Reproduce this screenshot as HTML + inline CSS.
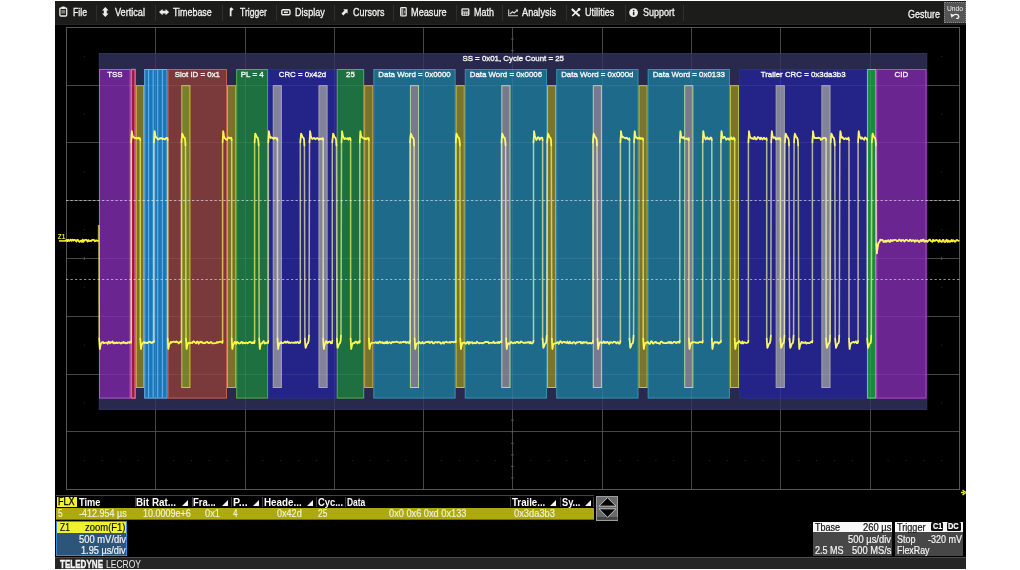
<!DOCTYPE html>
<html><head><meta charset="utf-8"><title>FlexRay decode</title>
<style>
html,body{margin:0;padding:0;background:#fff;}
body{width:1020px;height:570px;position:relative;overflow:hidden;font-family:"Liberation Sans",sans-serif;}
#ui{position:absolute;left:55px;top:1px;width:911px;height:568px;background:#000;overflow:hidden;will-change:transform;}
#menu{position:absolute;left:0;top:0;width:911px;height:23px;background:#1c1c1b;border-bottom:1px solid #242424;}
.mi{position:absolute;top:4.8px;-webkit-text-stroke:0.3px #f2f2f2;color:#f2f2f2;font-size:10.5px;line-height:12px;white-space:nowrap;transform-origin:0 50%;}
.sep{position:absolute;top:4px;width:1px;height:16px;background:#2f2f2f;}
.ic{position:absolute;}
#plot{position:absolute;left:-55px;top:-1px;}
.lb{font-family:"Liberation Sans",sans-serif;font-size:8px;fill:#f8f8f8;text-anchor:middle;stroke:#f8f8f8;stroke-width:0.32px;}
#tbl{position:absolute;left:1px;top:494px;width:538px;height:24px;border-top:1px solid #444;}
.th{position:absolute;top:1.6px;height:10px;color:#fff;font-weight:bold;font-size:10px;line-height:10px;white-space:nowrap;transform-origin:0 50%;}
.td{position:absolute;top:12.5px;-webkit-text-stroke:0.2px #f1efd2;color:#f1efd2;font-size:10px;line-height:10px;white-space:nowrap;transform-origin:0 50%;}
.cs{position:absolute;top:1px;width:1px;height:10px;background:#3a3a3a;}
.tri{position:absolute;top:4px;width:0;height:0;border-left:6px solid transparent;border-bottom:6px solid #f4f4f4;}
#row{position:absolute;left:0;top:12px;width:538px;height:11px;background:#b0a810;border-bottom:1px solid #2a7c8c;}
#flx{position:absolute;left:1px;top:1px;width:20px;height:10px;background:#f2f22e;color:#000;font-size:10px;line-height:10.5px;-webkit-text-stroke:0.3px #000;}
.box{position:absolute;font-size:10.5px;color:#f4f4f4;white-space:nowrap;-webkit-text-stroke:0.2px currentColor;}
.r{position:absolute;white-space:nowrap;transform-origin:100% 50%;}
.l{position:absolute;white-space:nowrap;transform-origin:0 50%;}
#foot{position:absolute;left:0;top:556px;width:911px;height:12px;background:#262626;border-top:1px solid #4a4a4a;}
</style></head><body>
<div id="ui">
 <div id="menu">
  <span class="mi" style="left:18.0px;transform:scaleX(0.827)">File</span>
  <span class="mi" style="left:60.0px;transform:scaleX(0.871)">Vertical</span>
  <span class="mi" style="left:118.0px;transform:scaleX(0.847)">Timebase</span>
  <span class="mi" style="left:185.0px;transform:scaleX(0.821)">Trigger</span>
  <span class="mi" style="left:239.8px;transform:scaleX(0.866)">Display</span>
  <span class="mi" style="left:297.6px;transform:scaleX(0.854)">Cursors</span>
  <span class="mi" style="left:356.3px;transform:scaleX(0.874)">Measure</span>
  <span class="mi" style="left:419.2px;transform:scaleX(0.852)">Math</span>
  <span class="mi" style="left:467.4px;transform:scaleX(0.875)">Analysis</span>
  <span class="mi" style="left:530.4px;transform:scaleX(0.866)">Utilities</span>
  <span class="mi" style="left:587.7px;transform:scaleX(0.854)">Support</span>
  <span class="mi" style="left:852.8px;top:6.8px;transform:scaleX(0.854)">Gesture</span>
  <i class="sep" style="left:41.0px"></i>
  <i class="sep" style="left:100.0px"></i>
  <i class="sep" style="left:167.0px"></i>
  <i class="sep" style="left:220.5px"></i>
  <i class="sep" style="left:279.0px"></i>
  <i class="sep" style="left:338.0px"></i>
  <i class="sep" style="left:400.5px"></i>
  <i class="sep" style="left:447.0px"></i>
  <i class="sep" style="left:511.0px"></i>
  <i class="sep" style="left:569.5px"></i>
  <i class="sep" style="left:628.0px"></i>
  <svg class="ic" style="left:4.3px;top:5.3px" width="9" height="11" viewBox="0 0 9 11"><rect x="0.9" y="2" width="6.8" height="8" rx="1.1" fill="none" stroke="#ededed" stroke-width="1.3"/><rect x="2.6" y="0.4" width="3.4" height="2.6" rx="0.8" fill="#ededed"/><rect x="2.3" y="4" width="4" height="3.6" fill="#7c7c7c"/></svg>
  <svg class="ic" style="left:47.2px;top:6.0px" width="7" height="10.4" viewBox="0 0 7 10.4"><path d="M3.3 0 L6.6 3.5 H4.8 V6.5 H6.6 L3.3 10 L0 6.5 H1.8 V3.5 H0 Z" fill="#ededed"/></svg>
  <svg class="ic" style="left:103.6px;top:8.2px" width="10.4" height="6.4" viewBox="0 0 10.4 6.4"><path d="M0 3.1 L3.6 0 V1.8 H6.6 V0 L10.2 3.1 L6.6 6.2 V4.4 H3.6 V6.2 Z" fill="#ededed"/></svg>
  <svg class="ic" style="left:174.0px;top:6.1px" width="6" height="10" viewBox="0 0 6 10"><path d="M0.8 9.2 V1.6 L2.2 0.2 L4.6 2.3 L2.5 3.9 V9.2 Z" fill="#ededed"/></svg>
  <svg class="ic" style="left:226.0px;top:7.6px" width="10" height="7.2" viewBox="0 0 10 7.2"><rect x="0.8" y="0.8" width="8.2" height="5" rx="1.2" fill="none" stroke="#ededed" stroke-width="1.4"/><rect x="2.9" y="2.5" width="4" height="1.6" fill="#ededed"/></svg>
  <svg class="ic" style="left:285.5px;top:7.6px" width="7" height="7" viewBox="0 0 7 7"><path d="M2.2 0.3 H6.6 V4.7 L5.3 3.4 L2.3 6.4 L0.5 4.6 L3.5 1.6 Z" fill="#ededed"/></svg>
  <svg class="ic" style="left:344.8px;top:5.9px" width="7" height="10" viewBox="0 0 7 10"><rect x="0.7" y="0.7" width="5.5" height="8.2" rx="0.7" fill="#2a2a2a" stroke="#ededed" stroke-width="1.2"/><rect x="1.3" y="1.3" width="2" height="7" fill="#9a9a9a"/><path d="M4 4.2 H5.6 M4 5.8 H5.6" stroke="#cfcfcf" stroke-width="0.8"/></svg>
  <svg class="ic" style="left:406.0px;top:7.3px" width="9" height="8.4" viewBox="0 0 9 8.4"><rect x="0.3" y="0.3" width="8.2" height="7.7" rx="1.4" fill="#dcdcdc"/><rect x="1.7" y="1.6" width="5.4" height="1.9" fill="#333"/><path d="M1.9 5 H3.3 M3.9 5 H5.1 M5.7 5 H6.9 M1.9 6.7 H3.3 M3.9 6.7 H5.1 M5.7 6.7 H6.9" stroke="#333" stroke-width="1.1"/></svg>
  <svg class="ic" style="left:452.8px;top:7.6px" width="11" height="8" viewBox="0 0 11 8"><path d="M0.7 0.5 V6.8 H10" stroke="#cfcfcf" stroke-width="1.1" fill="none"/><path d="M2 5 L4.4 2.8 L6.2 4 L9.2 1.2" stroke="#d8d8d8" stroke-width="1.2" fill="none"/><path d="M7.4 0.5 H10 V3.1 Z" fill="#d8d8d8"/></svg>
  <svg class="ic" style="left:516.4px;top:6.9px" width="10" height="9" viewBox="0 0 10 9"><path d="M1.9 1.9 L8 7.5" stroke="#ededed" stroke-width="2.1" stroke-linecap="round"/><path d="M7.9 1.5 L1.7 7.5" stroke="#ededed" stroke-width="1.7" stroke-linecap="round"/><path d="M0.2 1.4 L1.6 0 L2.2 1.4 L3.4 2 L2 3.4 Z" fill="#ededed"/><circle cx="8.1" cy="1.4" r="1.35" fill="#ededed"/></svg>
  <svg class="ic" style="left:574.2px;top:6.5px" width="9.4" height="9.4" viewBox="0 0 9.4 9.4"><circle cx="4.6" cy="4.6" r="4.4" fill="#ededed"/><rect x="3.9" y="3.9" width="1.5" height="3.3" fill="#222"/><rect x="3.9" y="1.9" width="1.5" height="1.3" fill="#222"/></svg>
  <div style="position:absolute;left:888.5px;top:0.8px;width:22.3px;height:21px;background:#555;border:1px dotted #8a8a8a;box-sizing:border-box"><span class="l" style="left:2.6px;top:2.4px;font-size:6.8px;line-height:8px;color:#f4f4f4;transform:scaleX(0.98)">Undo</span><svg style="position:absolute;left:5.4px;top:9.9px" width="10" height="6.5" viewBox="0 0 11 7"><path d="M3 3 C5 0.6 9.4 1 9.6 3.6 C9.8 5.2 8.6 6.2 6.8 6.2" stroke="#f2f2f2" stroke-width="1.5" fill="none"/><path d="M0.4 0.6 L4.8 2.4 L1.6 5.2 Z" fill="#f2f2f2"/></svg></div>
 </div>
 <svg id="plot" width="1020" height="570" viewBox="0 0 1020 570">
  <path d="M155.5 27.5 V489.5 M245.5 27.5 V489.5 M334.5 27.5 V489.5 M423.5 27.5 V489.5 M512.5 27.5 V489.5 M602.5 27.5 V489.5 M691.5 27.5 V489.5 M780.5 27.5 V489.5 M870.5 27.5 V489.5 M66.5 85.5 H959.5 M66.5 142.5 H959.5 M66.5 200.5 H959.5 M66.5 258.5 H959.5 M66.5 316.5 H959.5 M66.5 374.5 H959.5 M66.5 431.5 H959.5" stroke="#393939" stroke-width="1" fill="none"/>
  <path d="M84.4 257.0 V260.0 M102.2 257.0 V260.0 M120.1 257.0 V260.0 M137.9 257.0 V260.0 M155.8 257.0 V260.0 M173.7 257.0 V260.0 M191.5 257.0 V260.0 M209.4 257.0 V260.0 M227.2 257.0 V260.0 M245.1 257.0 V260.0 M263.0 257.0 V260.0 M280.8 257.0 V260.0 M298.7 257.0 V260.0 M316.5 257.0 V260.0 M334.4 257.0 V260.0 M352.3 257.0 V260.0 M370.1 257.0 V260.0 M388.0 257.0 V260.0 M405.8 257.0 V260.0 M423.7 257.0 V260.0 M441.6 257.0 V260.0 M459.4 257.0 V260.0 M477.3 257.0 V260.0 M495.1 257.0 V260.0 M513.0 257.0 V260.0 M530.9 257.0 V260.0 M548.7 257.0 V260.0 M566.6 257.0 V260.0 M584.4 257.0 V260.0 M602.3 257.0 V260.0 M620.2 257.0 V260.0 M638.0 257.0 V260.0 M655.9 257.0 V260.0 M673.7 257.0 V260.0 M691.6 257.0 V260.0 M709.5 257.0 V260.0 M727.3 257.0 V260.0 M745.2 257.0 V260.0 M763.0 257.0 V260.0 M780.9 257.0 V260.0 M798.8 257.0 V260.0 M816.6 257.0 V260.0 M834.5 257.0 V260.0 M852.3 257.0 V260.0 M870.2 257.0 V260.0 M888.1 257.0 V260.0 M905.9 257.0 V260.0 M923.8 257.0 V260.0 M941.6 257.0 V260.0 M511.0 39.0 H514.0 M511.0 50.6 H514.0 M511.0 62.1 H514.0 M511.0 73.7 H514.0 M511.0 85.2 H514.0 M511.0 96.8 H514.0 M511.0 108.3 H514.0 M511.0 119.9 H514.0 M511.0 131.4 H514.0 M511.0 143.0 H514.0 M511.0 154.6 H514.0 M511.0 166.1 H514.0 M511.0 177.7 H514.0 M511.0 189.2 H514.0 M511.0 200.8 H514.0 M511.0 212.3 H514.0 M511.0 223.8 H514.0 M511.0 235.4 H514.0 M511.0 246.9 H514.0 M511.0 258.5 H514.0 M511.0 270.1 H514.0 M511.0 281.6 H514.0 M511.0 293.1 H514.0 M511.0 304.7 H514.0 M511.0 316.2 H514.0 M511.0 327.8 H514.0 M511.0 339.4 H514.0 M511.0 350.9 H514.0 M511.0 362.4 H514.0 M511.0 374.0 H514.0 M511.0 385.6 H514.0 M511.0 397.1 H514.0 M511.0 408.6 H514.0 M511.0 420.2 H514.0 M511.0 431.8 H514.0 M511.0 443.3 H514.0 M511.0 454.9 H514.0 M511.0 466.4 H514.0 M511.0 477.9 H514.0" stroke="#484848" stroke-width="1" fill="none"/>
  <path d="M83.86 56.4 H959 M83.86 114.1 H959 M83.86 171.9 H959 M83.86 229.6 H959 M83.86 287.4 H959 M83.86 345.1 H959 M83.86 402.9 H959 M83.86 460.6 H959" stroke="#2e2e2e" stroke-width="1" stroke-dasharray="1 16.86" fill="none"/>
  <rect x="66.5" y="27.5" width="893" height="462" fill="none" stroke="#565656" stroke-width="1"/>
<rect x="99.3" y="53.6" width="827.5" height="355.8" fill="#29294d" stroke="#35355c" stroke-width="1"/>
<rect x="99.50" y="69.5" width="30.60" height="328.6" fill="#6a2590" stroke="#b45ad0" stroke-width="1"/>
<rect x="131.35" y="69.5" width="3.77" height="328.6" fill="#9a1838" stroke="#e0609a" stroke-width="1.5"/>
<rect x="136.38" y="85.7" width="7.34" height="301.8" fill="#78722a" stroke="#d8a848" stroke-width="1"/>
<rect x="144.72" y="69.5" width="22.36" height="328.6" fill="#1d76b8" stroke="#6cb4e4" stroke-width="1"/>
<path d="M148.59 70.0 V397.6" stroke="#5cb4ec" stroke-width="1.1"/>
<path d="M153.16 70.0 V397.6" stroke="#5cb4ec" stroke-width="1.1"/>
<path d="M157.74 70.0 V397.6" stroke="#5cb4ec" stroke-width="1.1"/>
<path d="M162.41 70.0 V397.6" stroke="#5cb4ec" stroke-width="1.1"/>
<rect x="168.08" y="69.5" width="58.44" height="328.6" fill="#7a3a3c" stroke="#c8604c" stroke-width="1"/>
<rect x="181.80" y="85.7" width="8.14" height="301.8" fill="#78802a" stroke="#d4c43c" stroke-width="1"/>
<rect x="227.52" y="85.7" width="8.14" height="301.8" fill="#78722a" stroke="#d8a848" stroke-width="1"/>
<rect x="236.66" y="69.5" width="31.00" height="328.6" fill="#1f7040" stroke="#54b048" stroke-width="1"/>
<rect x="268.66" y="69.5" width="67.58" height="328.6" fill="#242488" stroke="#2c2c98" stroke-width="1"/>
<rect x="273.24" y="85.7" width="8.14" height="301.8" fill="#82829a" stroke="#a6a6b2" stroke-width="1"/>
<rect x="318.96" y="85.7" width="8.14" height="301.8" fill="#82829a" stroke="#a6a6b2" stroke-width="1"/>
<rect x="337.24" y="69.5" width="26.43" height="328.6" fill="#1f7040" stroke="#54b048" stroke-width="1"/>
<rect x="364.68" y="85.7" width="8.14" height="301.8" fill="#78722a" stroke="#d8a848" stroke-width="1"/>
<rect x="373.82" y="69.5" width="81.30" height="328.6" fill="#1e6a8a" stroke="#3a90aa" stroke-width="1"/>
<rect x="410.40" y="85.7" width="8.14" height="301.8" fill="#78788e" stroke="#b4d894" stroke-width="1"/>
<rect x="456.12" y="85.7" width="8.14" height="301.8" fill="#7a742c" stroke="#c0c840" stroke-width="1"/>
<rect x="465.26" y="69.5" width="81.30" height="328.6" fill="#1e6a8a" stroke="#3a90aa" stroke-width="1"/>
<rect x="501.84" y="85.7" width="8.14" height="301.8" fill="#78788e" stroke="#b4d894" stroke-width="1"/>
<rect x="547.56" y="85.7" width="8.14" height="301.8" fill="#7a742c" stroke="#c0c840" stroke-width="1"/>
<rect x="556.70" y="69.5" width="81.30" height="328.6" fill="#1e6a8a" stroke="#3a90aa" stroke-width="1"/>
<rect x="593.28" y="85.7" width="8.14" height="301.8" fill="#78788e" stroke="#b4d894" stroke-width="1"/>
<rect x="639.00" y="85.7" width="8.14" height="301.8" fill="#7a742c" stroke="#c0c840" stroke-width="1"/>
<rect x="648.14" y="69.5" width="81.30" height="328.6" fill="#1e6a8a" stroke="#3a90aa" stroke-width="1"/>
<rect x="684.72" y="85.7" width="8.14" height="301.8" fill="#78788e" stroke="#b4d894" stroke-width="1"/>
<rect x="730.44" y="85.7" width="8.14" height="301.8" fill="#7a742c" stroke="#c0c840" stroke-width="1"/>
<rect x="739.58" y="69.5" width="127.02" height="328.6" fill="#242488" stroke="#2c2c98" stroke-width="1"/>
<rect x="776.16" y="85.7" width="8.14" height="301.8" fill="#82829a" stroke="#a6a6b2" stroke-width="1"/>
<rect x="821.88" y="85.7" width="8.14" height="301.8" fill="#82829a" stroke="#a6a6b2" stroke-width="1"/>
<rect x="867.60" y="69.5" width="8.14" height="328.6" fill="#1c8a3c" stroke="#48e878" stroke-width="1"/>
<rect x="876.74" y="69.5" width="49.29" height="328.6" fill="#6a2590" stroke="#c040d8" stroke-width="1"/>
<text transform="translate(114.8 77.0) scale(0.985 1)" class="lb">TSS</text>
<text transform="translate(197.3 77.0) scale(0.985 1)" class="lb">Slot ID = 0x1</text>
<text transform="translate(252.2 77.0) scale(0.985 1)" class="lb">PL = 4</text>
<text transform="translate(302.5 77.0) scale(0.985 1)" class="lb">CRC = 0x42d</text>
<text transform="translate(350.5 77.0) scale(0.985 1)" class="lb">25</text>
<text transform="translate(414.5 77.0) scale(0.985 1)" class="lb">Data Word = 0x0000</text>
<text transform="translate(505.9 77.0) scale(0.985 1)" class="lb">Data Word = 0x0006</text>
<text transform="translate(597.3 77.0) scale(0.985 1)" class="lb">Data Word = 0x000d</text>
<text transform="translate(688.8 77.0) scale(0.985 1)" class="lb">Data Word = 0x0133</text>
<text transform="translate(803.1 77.0) scale(0.985 1)" class="lb">Trailer CRC = 0x3da3b3</text>
<text transform="translate(901.4 77.0) scale(0.985 1)" class="lb">CID</text>
<text transform="translate(513.2 61.1) scale(0.985 1)" class="lb">SS = 0x01, Cycle Count = 25</text>
  <path d="M155.5 27.5 V489.5 M245.5 27.5 V489.5 M334.5 27.5 V489.5 M423.5 27.5 V489.5 M512.5 27.5 V489.5 M602.5 27.5 V489.5 M691.5 27.5 V489.5 M780.5 27.5 V489.5 M870.5 27.5 V489.5 M66.5 85.5 H959.5 M66.5 142.5 H959.5 M66.5 200.5 H959.5 M66.5 258.5 H959.5 M66.5 316.5 H959.5 M66.5 374.5 H959.5 M66.5 431.5 H959.5" stroke="#ffffff" stroke-opacity="0.07" stroke-width="1" fill="none"/>
  <path d="M66 200.5 H960 M66 279.5 H960" stroke="#e8e8f4" stroke-width="1" stroke-dasharray="2.3 2.2" fill="none" stroke-opacity="0.62"/>
  <path d="M98.5 241.3 L98.6 225.0 M98.9 225.0 L99.1 338.6 M131.2 340.8 L131.2 142.4 M140.3 140.2 L140.3 338.6 M154.0 340.8 L154.0 142.4 M167.7 140.2 L167.7 338.6 M181.4 340.8 L181.4 142.4 M185.5 145.4 L186.0 338.6 M222.6 340.8 L222.6 142.4 M231.7 140.2 L231.7 338.6 M254.6 340.8 L254.6 142.4 M258.7 145.4 L259.2 338.6 M268.3 340.8 L268.3 142.4 M277.5 140.2 L277.5 338.6 M300.3 340.8 L300.3 142.4 M304.4 145.4 L304.9 338.6 M309.0 335.6 L309.5 142.4 M323.2 140.2 L323.2 338.6 M332.3 340.8 L332.3 142.4 M336.4 145.4 L336.9 338.6 M341.0 335.6 L341.5 142.4 M350.6 140.2 L350.6 338.6 M359.8 340.8 L359.8 142.4 M368.9 140.2 L368.9 338.6 M410.0 340.8 L410.0 142.4 M414.1 145.4 L414.6 338.6 M455.8 340.8 L455.8 142.4 M459.9 145.4 L460.3 338.6 M501.5 340.8 L501.5 142.4 M505.6 145.4 L506.1 338.6 M533.5 340.8 L533.5 142.4 M542.6 140.2 L542.6 338.6 M546.7 335.6 L547.2 142.4 M551.3 145.4 L551.8 338.6 M592.9 340.8 L592.9 142.4 M597.0 145.4 L597.5 338.6 M620.4 340.8 L620.4 142.4 M629.5 140.2 L629.5 338.6 M633.6 335.6 L634.1 142.4 M643.2 140.2 L643.2 338.6 M679.8 340.8 L679.8 142.4 M688.9 140.2 L688.9 338.6 M702.7 340.8 L702.7 142.4 M711.8 140.2 L711.8 338.6 M720.9 340.8 L720.9 142.4 M734.7 140.2 L734.7 338.6 M748.4 340.8 L748.4 142.4 M766.7 140.2 L766.7 338.6 M770.8 335.6 L771.2 142.4 M780.4 140.2 L780.4 338.6 M784.5 335.6 L784.9 142.4 M789.0 145.4 L789.5 338.6 M793.6 335.6 L794.1 142.4 M798.2 145.4 L798.7 338.6 M812.4 340.8 L812.4 142.4 M826.1 140.2 L826.1 338.6 M830.2 335.6 L830.7 142.4 M834.8 145.4 L835.2 338.6 M839.3 335.6 L839.8 142.4 M849.0 140.2 L849.0 338.6 M858.1 340.8 L858.1 142.4 M867.2 140.2 L867.2 338.6 M871.3 335.6 L871.8 142.4 M875.9 145.4 L876.4 243.8" stroke="#d2d232" stroke-opacity="0.8" stroke-width="1.5" fill="none" style="mix-blend-mode:screen"/>
  <path d="M66.0 240.3 L66.8 239.9 L67.6 241.2 L68.4 239.7 L69.2 240.9 L70.0 240.5 L70.8 239.7 L71.6 240.8 L72.4 239.6 L73.2 240.6 L74.0 239.7 L74.8 239.7 L75.6 240.6 L76.4 241.6 L77.2 239.8 L78.0 240.1 L78.8 241.1 L79.6 242.0 L80.4 241.0 L81.2 240.5 L82.0 242.0 L82.8 239.6 L83.6 241.7 L84.4 240.3 L85.2 239.9 L86.0 239.8 L86.8 240.3 L87.6 241.6 L88.4 240.0 L89.2 241.0 L90.0 241.2 L90.8 240.5 L91.6 240.9 L92.4 239.7 L93.2 239.7 L94.0 240.0 L94.8 241.3 L95.6 240.6 L96.4 240.3 L97.2 241.0 L98.0 240.7 M99.2 338.6 L99.8 349.0 L100.5 345.0 L101.3 343.0 L102.1 342.3 L102.9 341.9 L103.7 343.3 L104.5 342.9 L105.3 342.8 L106.1 342.7 L106.9 342.6 L107.7 343.8 L108.5 341.5 L109.3 342.1 L110.1 343.4 L110.9 342.2 L111.7 342.4 L112.5 341.4 L113.3 343.1 L114.1 343.4 L114.9 342.6 L115.7 343.1 L116.5 342.3 L117.3 343.2 L118.1 342.7 L118.9 342.5 L119.7 342.5 L120.5 343.4 L121.3 343.4 L122.1 342.4 L122.9 342.9 L123.7 341.9 L124.5 343.0 L125.3 342.7 L126.1 343.5 L126.9 343.3 L127.7 342.2 L128.5 342.3 L129.3 342.9 L130.1 341.8 L131.0 342.6 L131.2 340.8 M131.2 142.4 L131.8 131.2 L132.5 135.7 L133.3 137.5 L134.1 137.3 L134.9 138.3 L135.7 137.8 L136.5 138.5 L137.3 138.1 L138.1 138.6 L138.9 137.6 L139.7 138.8 L140.1 138.4 L140.3 140.2 M140.3 338.6 L140.9 349.0 L141.6 345.0 L142.4 343.6 L143.2 342.6 L144.0 342.0 L144.8 343.1 L145.6 342.5 L146.4 342.8 L147.2 343.2 L148.0 342.4 L148.8 342.2 L149.6 341.7 L150.4 341.8 L151.2 342.9 L152.0 343.0 L152.8 341.9 L153.8 342.2 L154.0 340.8 M154.0 142.4 L154.6 131.2 L155.4 135.7 L156.2 137.7 L157.0 137.8 L157.8 139.4 L158.6 139.4 L159.4 138.4 L160.2 138.1 L161.0 138.7 L161.8 138.1 L162.6 139.2 L163.4 138.5 L164.2 139.0 L165.0 139.4 L165.8 138.3 L166.6 137.9 L167.5 138.1 L167.7 140.2 M167.7 338.6 L168.3 349.0 L169.1 345.0 L169.9 343.3 L170.7 341.8 L171.5 342.7 L172.3 342.0 L173.1 341.7 L173.9 341.6 L174.7 342.2 L175.5 342.1 L176.3 341.4 L177.1 342.2 L177.9 342.1 L178.7 343.5 L179.5 342.5 L180.3 341.7 L181.2 342.4 L181.4 340.8 M181.4 142.4 L181.8 137.4 L182.2 133.6 L182.9 135.0 L183.7 137.2 L184.6 137.8 L185.2 139.9 L185.5 145.4 M186.0 338.6 L186.6 349.0 L187.4 345.0 L188.2 343.0 L189.0 342.6 L189.8 343.1 L190.6 342.9 L191.4 342.6 L192.2 343.1 L193.0 341.8 L193.8 341.3 L194.6 342.2 L195.4 342.6 L196.2 343.3 L197.0 341.6 L197.8 341.6 L198.6 343.8 L199.4 342.8 L200.2 341.6 L201.0 342.5 L201.8 341.9 L202.6 342.8 L203.4 343.3 L204.2 343.1 L205.0 343.1 L205.8 342.3 L206.6 342.2 L207.4 341.8 L208.2 343.2 L209.0 342.8 L209.8 343.1 L210.6 342.1 L211.4 342.1 L212.2 343.3 L213.0 343.5 L213.8 343.2 L214.6 343.2 L215.4 343.3 L216.2 343.0 L217.0 342.0 L217.8 342.6 L218.6 342.4 L219.4 341.7 L220.2 341.6 L221.0 342.2 L221.8 342.2 L222.4 342.8 L222.6 340.8 M222.6 142.4 L223.2 131.2 L223.9 135.7 L224.7 138.3 L225.5 138.7 L226.3 139.7 L227.1 139.8 L227.9 137.8 L228.7 137.4 L229.5 138.1 L230.3 138.3 L231.1 137.7 L231.5 138.5 L231.7 140.2 M231.7 338.6 L232.3 349.0 L233.1 345.0 L233.9 343.6 L234.7 341.8 L235.5 342.8 L236.3 343.8 L237.1 341.9 L237.9 342.4 L238.7 343.2 L239.5 343.6 L240.3 343.3 L241.1 342.2 L241.9 341.8 L242.7 343.5 L243.5 342.5 L244.3 342.9 L245.1 343.3 L245.9 342.6 L246.7 342.6 L247.5 343.3 L248.3 342.8 L249.1 342.1 L249.9 342.1 L250.7 341.8 L251.5 343.2 L252.3 343.3 L253.1 342.1 L253.9 343.2 L254.4 343.0 L254.6 340.8 M254.6 142.4 L254.9 137.4 L255.3 133.6 L256.0 135.0 L256.8 137.2 L257.7 137.8 L258.3 139.9 L258.7 145.4 M259.2 338.6 L259.8 349.0 L260.5 345.0 L261.3 343.4 L262.1 343.4 L262.9 341.8 L263.7 341.0 L264.5 343.5 L265.3 343.5 L266.1 342.7 L266.9 342.9 L267.7 342.4 L268.1 342.9 L268.3 340.8 M268.3 142.4 L268.9 131.2 L269.7 135.7 L270.5 138.1 L271.3 137.4 L272.1 137.5 L272.9 138.4 L273.7 139.0 L274.5 137.6 L275.3 137.8 L276.1 138.0 L276.9 139.6 L277.3 138.3 L277.5 140.2 M277.5 338.6 L278.1 349.0 L278.8 345.0 L279.6 343.2 L280.4 343.4 L281.2 341.8 L282.0 343.3 L282.8 343.2 L283.6 342.8 L284.4 342.1 L285.2 341.5 L286.0 342.9 L286.8 342.2 L287.6 341.3 L288.4 343.0 L289.2 342.3 L290.0 342.8 L290.8 342.8 L291.6 342.5 L292.4 342.5 L293.2 342.9 L294.0 342.5 L294.8 342.9 L295.6 342.0 L296.4 342.9 L297.2 342.0 L298.0 342.0 L298.8 343.2 L299.6 342.8 L300.1 342.6 L300.3 340.8 M300.3 142.4 L300.7 137.4 L301.1 133.6 L301.8 135.0 L302.6 137.2 L303.5 137.8 L304.1 139.9 L304.4 145.4 M304.9 338.6 L305.2 343.6 L305.6 347.8 L306.3 346.2 L307.1 343.9 L308.0 343.2 L308.6 341.1 L309.0 335.6 M309.5 142.4 L310.1 131.2 L310.8 135.7 L311.6 138.1 L312.4 139.0 L313.2 138.4 L314.0 137.8 L314.8 138.6 L315.6 139.3 L316.4 138.2 L317.2 138.0 L318.0 138.4 L318.8 139.7 L319.6 138.8 L320.4 138.7 L321.2 139.2 L322.0 138.3 L323.0 138.4 L323.2 140.2 M323.2 338.6 L323.8 349.0 L324.5 345.0 L325.3 343.6 L326.1 341.2 L326.9 341.8 L327.7 343.1 L328.5 341.9 L329.3 341.6 L330.1 341.6 L330.9 343.4 L331.7 343.3 L332.1 342.9 L332.3 340.8 M332.3 142.4 L332.7 137.4 L333.1 133.6 L333.8 135.0 L334.6 137.2 L335.5 137.8 L336.1 139.9 L336.4 145.4 M336.9 338.6 L337.2 343.6 L337.6 347.8 L338.3 346.2 L339.1 343.9 L340.0 343.2 L340.6 341.1 L341.0 335.6 M341.5 142.4 L342.1 131.2 L342.8 135.7 L343.6 137.5 L344.4 139.2 L345.2 138.2 L346.0 138.7 L346.8 138.8 L347.6 138.2 L348.4 139.7 L349.2 138.0 L350.0 137.9 L350.4 138.8 L350.6 140.2 M350.6 338.6 L351.2 349.0 L352.0 345.0 L352.8 343.5 L353.6 342.9 L354.4 343.2 L355.2 342.0 L356.0 341.5 L356.8 342.5 L357.6 343.5 L358.4 341.6 L359.2 342.2 L359.6 342.6 L359.8 340.8 M359.8 142.4 L360.4 131.2 L361.1 135.7 L361.9 137.3 L362.7 137.9 L363.5 138.4 L364.3 138.2 L365.1 139.4 L365.9 138.4 L366.7 139.2 L367.5 138.1 L368.3 138.1 L368.7 138.0 L368.9 140.2 M368.9 338.6 L369.5 349.0 L370.2 345.0 L371.0 343.5 L371.8 342.6 L372.6 342.7 L373.4 342.8 L374.2 342.9 L375.0 342.6 L375.8 342.2 L376.6 343.0 L377.4 342.4 L378.2 343.3 L379.0 342.1 L379.8 341.5 L380.6 342.7 L381.4 342.7 L382.2 342.1 L383.0 343.3 L383.8 342.6 L384.6 343.3 L385.4 342.1 L386.2 343.2 L387.0 341.5 L387.8 343.3 L388.6 342.7 L389.4 342.3 L390.2 342.5 L391.0 343.4 L391.8 342.3 L392.6 341.9 L393.4 342.5 L394.2 342.1 L395.0 342.0 L395.8 342.0 L396.6 341.6 L397.4 342.0 L398.2 342.3 L399.0 342.3 L399.8 343.0 L400.6 342.1 L401.4 342.7 L402.2 342.0 L403.0 342.3 L403.8 341.6 L404.6 342.2 L405.4 341.7 L406.2 343.0 L407.0 342.6 L407.8 342.0 L408.6 342.6 L409.4 343.4 L409.8 342.3 L410.0 340.8 M410.0 142.4 L410.4 137.4 L410.8 133.6 L411.5 135.0 L412.3 137.2 L413.2 137.8 L413.8 139.9 L414.1 145.4 M414.6 338.6 L415.2 349.0 L416.0 345.0 L416.8 343.5 L417.6 343.2 L418.4 342.9 L419.2 341.8 L420.0 342.9 L420.8 343.5 L421.6 343.3 L422.4 341.8 L423.2 343.4 L424.0 343.4 L424.8 342.8 L425.6 342.0 L426.4 342.3 L427.2 342.1 L428.0 341.9 L428.8 341.5 L429.6 343.0 L430.4 342.4 L431.2 342.0 L432.0 341.6 L432.8 343.2 L433.6 343.5 L434.4 343.0 L435.2 342.0 L436.0 342.0 L436.8 342.4 L437.6 342.6 L438.4 341.8 L439.2 342.4 L440.0 342.3 L440.8 343.6 L441.6 343.4 L442.4 342.6 L443.2 342.2 L444.0 343.6 L444.8 342.2 L445.6 342.2 L446.4 341.7 L447.2 342.5 L448.0 342.5 L448.8 342.5 L449.6 342.0 L450.4 342.7 L451.2 341.7 L452.0 342.1 L452.8 341.8 L453.6 342.5 L454.4 341.7 L455.2 341.6 L455.6 342.4 L455.8 340.8 M455.8 142.4 L456.1 137.4 L456.5 133.6 L457.2 135.0 L458.0 137.2 L458.9 137.8 L459.5 139.9 L459.9 145.4 M460.3 338.6 L460.9 349.0 L461.7 345.0 L462.5 342.9 L463.3 342.7 L464.1 342.4 L464.9 342.8 L465.7 343.6 L466.5 343.4 L467.3 341.9 L468.1 342.1 L468.9 344.0 L469.7 342.1 L470.5 342.6 L471.3 342.7 L472.1 342.1 L472.9 343.5 L473.7 343.1 L474.5 342.6 L475.3 343.3 L476.1 343.4 L476.9 341.7 L477.7 342.4 L478.5 342.7 L479.3 343.4 L480.1 343.1 L480.9 343.0 L481.7 342.8 L482.5 343.5 L483.3 342.9 L484.1 342.8 L484.9 342.1 L485.7 341.9 L486.5 341.9 L487.3 342.2 L488.1 341.8 L488.9 343.4 L489.7 342.7 L490.5 342.7 L491.3 342.8 L492.1 343.0 L492.9 342.6 L493.7 341.6 L494.5 343.1 L495.3 343.1 L496.1 342.6 L496.9 342.6 L497.7 342.9 L498.5 341.8 L499.3 343.1 L500.1 342.1 L500.9 341.8 L501.3 342.4 L501.5 340.8 M501.5 142.4 L501.8 137.4 L502.2 133.6 L502.9 135.0 L503.7 137.2 L504.6 137.8 L505.2 139.9 L505.6 145.4 M506.1 338.6 L506.7 349.0 L507.4 345.0 L508.2 343.4 L509.0 343.6 L509.8 344.0 L510.6 342.2 L511.4 341.9 L512.2 342.9 L513.0 343.4 L513.8 342.8 L514.6 342.4 L515.4 343.1 L516.2 342.2 L517.0 341.8 L517.8 341.8 L518.6 343.1 L519.4 342.6 L520.2 342.7 L521.0 341.4 L521.8 341.8 L522.6 342.4 L523.4 342.9 L524.2 342.7 L525.0 342.9 L525.8 342.4 L526.6 342.7 L527.4 342.3 L528.2 342.5 L529.0 342.0 L529.8 343.4 L530.6 341.9 L531.4 343.4 L532.2 343.5 L533.3 342.2 L533.5 340.8 M533.5 142.4 L534.1 131.2 L534.8 135.7 L535.6 137.8 L536.4 140.0 L537.2 138.5 L538.0 137.3 L538.8 137.6 L539.6 139.8 L540.4 138.1 L541.2 138.1 L542.0 137.5 L542.4 138.4 L542.6 140.2 M542.6 338.6 L543.0 343.6 L543.4 347.8 L544.1 346.2 L544.9 343.9 L545.8 343.2 L546.4 341.1 L546.7 335.6 M547.2 142.4 L547.6 137.4 L548.0 133.6 L548.7 135.0 L549.5 137.2 L550.4 137.8 L551.0 139.9 L551.3 145.4 M551.8 338.6 L552.4 349.0 L553.1 345.0 L553.9 343.7 L554.7 343.5 L555.5 343.3 L556.3 343.1 L557.1 342.4 L557.9 342.2 L558.7 343.9 L559.5 342.5 L560.3 341.2 L561.1 341.7 L561.9 343.0 L562.7 342.5 L563.5 341.8 L564.3 341.8 L565.1 342.6 L565.9 342.3 L566.7 343.0 L567.5 341.5 L568.3 343.3 L569.1 343.4 L569.9 341.7 L570.7 343.3 L571.5 343.2 L572.3 343.5 L573.1 342.1 L573.9 342.2 L574.7 342.5 L575.5 343.7 L576.3 342.7 L577.1 342.2 L577.9 342.5 L578.7 342.3 L579.5 341.7 L580.3 341.7 L581.1 343.3 L581.9 342.3 L582.7 343.4 L583.5 342.0 L584.3 342.2 L585.1 342.7 L585.9 342.0 L586.7 342.3 L587.5 343.5 L588.3 343.4 L589.1 343.2 L589.9 342.8 L590.7 343.4 L591.5 343.5 L592.3 342.7 L592.7 342.8 L592.9 340.8 M592.9 142.4 L593.3 137.4 L593.7 133.6 L594.4 135.0 L595.2 137.2 L596.1 137.8 L596.7 139.9 L597.0 145.4 M597.5 338.6 L598.1 349.0 L598.8 345.0 L599.6 342.7 L600.4 342.0 L601.2 342.6 L602.0 343.3 L602.8 342.7 L603.6 341.4 L604.4 343.0 L605.2 342.2 L606.0 343.0 L606.8 342.1 L607.6 341.8 L608.4 343.2 L609.2 343.9 L610.0 342.1 L610.8 342.6 L611.6 342.3 L612.4 343.0 L613.2 342.4 L614.0 341.7 L614.8 341.9 L615.6 342.3 L616.4 343.4 L617.2 342.4 L618.0 342.0 L618.8 343.6 L619.6 343.6 L620.2 342.6 L620.4 340.8 M620.4 142.4 L621.0 131.2 L621.7 135.7 L622.5 137.4 L623.3 137.1 L624.1 137.6 L624.9 138.0 L625.7 138.4 L626.5 137.6 L627.3 138.1 L628.1 139.4 L628.9 139.3 L629.3 138.3 L629.5 140.2 M629.5 338.6 L629.9 343.6 L630.3 347.8 L631.0 346.2 L631.8 343.9 L632.7 343.2 L633.3 341.1 L633.6 335.6 M634.1 142.4 L634.7 131.2 L635.4 135.7 L636.2 137.7 L637.0 137.9 L637.8 138.7 L638.6 137.9 L639.4 137.5 L640.2 139.0 L641.0 138.1 L641.8 138.7 L642.6 138.3 L643.0 138.7 L643.2 140.2 M643.2 338.6 L643.8 349.0 L644.6 345.0 L645.4 342.9 L646.2 342.8 L647.0 342.7 L647.8 341.9 L648.6 343.2 L649.4 343.8 L650.2 343.6 L651.0 341.3 L651.8 341.4 L652.6 343.3 L653.4 343.7 L654.2 342.3 L655.0 342.5 L655.8 341.9 L656.6 342.7 L657.4 343.2 L658.2 342.9 L659.0 343.4 L659.8 343.8 L660.6 342.0 L661.4 341.6 L662.2 342.0 L663.0 342.9 L663.8 342.9 L664.6 343.2 L665.4 343.0 L666.2 343.1 L667.0 343.1 L667.8 342.4 L668.6 342.7 L669.4 341.9 L670.2 343.2 L671.0 342.0 L671.8 343.4 L672.6 343.0 L673.4 342.3 L674.2 341.8 L675.0 342.1 L675.8 342.9 L676.6 343.0 L677.4 341.8 L678.2 341.7 L679.0 342.7 L679.6 342.7 L679.8 340.8 M679.8 142.4 L680.4 131.2 L681.1 135.7 L681.9 137.7 L682.7 138.0 L683.5 137.0 L684.3 138.5 L685.1 138.8 L685.9 138.9 L686.7 138.3 L687.5 139.4 L688.3 138.8 L688.7 138.2 L688.9 140.2 M688.9 338.6 L689.5 349.0 L690.3 345.0 L691.1 342.9 L691.9 342.4 L692.7 342.6 L693.5 342.2 L694.3 342.3 L695.1 342.4 L695.9 342.7 L696.7 342.6 L697.5 342.8 L698.3 343.0 L699.1 342.2 L699.9 342.1 L700.7 342.3 L701.5 342.1 L702.5 342.7 L702.7 340.8 M702.7 142.4 L703.3 131.2 L704.0 135.7 L704.8 137.5 L705.6 139.5 L706.4 138.7 L707.2 137.3 L708.0 139.0 L708.8 138.5 L709.6 139.3 L710.4 137.5 L711.2 137.6 L711.6 138.6 L711.8 140.2 M711.8 338.6 L712.4 349.0 L713.1 345.0 L713.9 343.0 L714.7 342.0 L715.5 342.4 L716.3 342.6 L717.1 342.2 L717.9 342.4 L718.7 343.6 L719.5 342.4 L720.3 342.3 L720.7 342.4 L720.9 340.8 M720.9 142.4 L721.5 131.2 L722.3 135.7 L723.1 138.3 L723.9 137.2 L724.7 136.9 L725.5 138.4 L726.3 139.7 L727.1 139.0 L727.9 138.3 L728.7 139.4 L729.5 139.7 L730.3 138.1 L731.1 137.4 L731.9 139.2 L732.7 139.3 L733.5 137.6 L734.5 138.5 L734.7 140.2 M734.7 338.6 L735.3 349.0 L736.0 345.0 L736.8 343.1 L737.6 343.0 L738.4 341.8 L739.2 341.0 L740.0 342.3 L740.8 342.9 L741.6 343.5 L742.4 341.4 L743.2 343.4 L744.0 342.5 L744.8 342.4 L745.6 342.8 L746.4 343.1 L747.2 342.8 L748.2 342.2 L748.4 340.8 M748.4 142.4 L749.0 131.2 L749.7 135.7 L750.5 137.8 L751.3 138.5 L752.1 138.0 L752.9 138.8 L753.7 139.1 L754.5 136.9 L755.3 138.2 L756.1 139.5 L756.9 138.9 L757.7 137.1 L758.5 137.4 L759.3 138.0 L760.1 139.3 L760.9 137.6 L761.7 138.7 L762.5 139.5 L763.3 138.2 L764.1 137.7 L764.9 139.1 L765.7 138.8 L766.5 138.2 L766.7 140.2 M766.7 338.6 L767.0 343.6 L767.4 347.8 L768.1 346.2 L768.9 343.9 L769.8 343.2 L770.4 341.1 L770.8 335.6 M771.2 142.4 L771.8 131.2 L772.6 135.7 L773.4 138.0 L774.2 137.3 L775.0 137.4 L775.8 139.5 L776.6 139.3 L777.4 138.1 L778.2 139.1 L779.0 138.0 L779.8 138.1 L780.2 138.4 L780.4 140.2 M780.4 338.6 L780.7 343.6 L781.1 347.8 L781.8 346.2 L782.6 343.9 L783.5 343.2 L784.1 341.1 L784.5 335.6 M784.9 142.4 L785.3 137.4 L785.7 133.6 L786.4 135.0 L787.2 137.2 L788.1 137.8 L788.7 139.9 L789.0 145.4 M789.5 338.6 L789.9 343.6 L790.3 347.8 L791.0 346.2 L791.8 343.9 L792.7 343.2 L793.3 341.1 L793.6 335.6 M794.1 142.4 L794.4 137.4 L794.8 133.6 L795.5 135.0 L796.3 137.2 L797.2 137.8 L797.8 139.9 L798.2 145.4 M798.7 338.6 L799.3 349.0 L800.0 345.0 L800.8 343.7 L801.6 341.8 L802.4 342.5 L803.2 343.0 L804.0 342.3 L804.8 342.9 L805.6 342.2 L806.4 343.7 L807.2 342.9 L808.0 342.8 L808.8 343.2 L809.6 343.2 L810.4 342.3 L811.2 341.9 L812.2 342.5 L812.4 340.8 M812.4 142.4 L813.0 131.2 L813.7 135.7 L814.5 138.1 L815.3 137.8 L816.1 138.2 L816.9 137.9 L817.7 138.2 L818.5 137.6 L819.3 138.0 L820.1 138.0 L820.9 139.8 L821.7 139.3 L822.5 138.9 L823.3 137.8 L824.1 138.0 L824.9 137.8 L825.9 138.4 L826.1 140.2 M826.1 338.6 L826.4 343.6 L826.8 347.8 L827.5 346.2 L828.3 343.9 L829.2 343.2 L829.8 341.1 L830.2 335.6 M830.7 142.4 L831.0 137.4 L831.4 133.6 L832.1 135.0 L832.9 137.2 L833.8 137.8 L834.4 139.9 L834.8 145.4 M835.2 338.6 L835.6 343.6 L836.0 347.8 L836.7 346.2 L837.5 343.9 L838.4 343.2 L839.0 341.1 L839.3 335.6 M839.8 142.4 L840.4 131.2 L841.2 135.7 L842.0 138.0 L842.8 137.4 L843.6 138.7 L844.4 139.2 L845.2 138.4 L846.0 138.4 L846.8 139.3 L847.6 139.2 L848.4 137.5 L848.8 138.7 L849.0 140.2 M849.0 338.6 L849.6 349.0 L850.3 345.0 L851.1 343.0 L851.9 342.5 L852.7 342.4 L853.5 341.9 L854.3 342.7 L855.1 342.3 L855.9 341.4 L856.7 343.1 L857.5 343.2 L857.9 342.5 L858.1 340.8 M858.1 142.4 L858.7 131.2 L859.5 135.7 L860.3 137.7 L861.1 138.9 L861.9 137.4 L862.7 138.5 L863.5 139.1 L864.3 139.8 L865.1 137.3 L865.9 137.9 L866.7 139.2 L867.0 138.7 L867.2 140.2 M867.2 338.6 L867.6 343.6 L868.0 347.8 L868.7 346.2 L869.5 343.9 L870.4 343.2 L871.0 341.1 L871.3 335.6 M871.8 142.4 L872.2 137.4 L872.6 133.6 L873.3 135.0 L874.1 137.2 L875.0 137.8 L875.6 139.9 L875.9 145.4 M876.4 243.8 L876.9 253.5 L877.7 247.0 L878.7 242.5 L879.5 241.9 L880.3 239.6 L881.1 240.3 L881.9 239.8 L882.7 240.0 L883.5 242.0 L884.3 241.0 L885.1 241.9 L885.9 240.5 L886.7 241.8 L887.5 240.7 L888.3 240.2 L889.1 241.5 L889.9 242.0 L890.7 239.8 L891.5 241.0 L892.3 241.1 L893.1 240.1 L893.9 240.5 L894.7 239.9 L895.5 240.0 L896.3 240.2 L897.1 241.1 L897.9 241.2 L898.7 240.0 L899.5 239.5 L900.3 240.4 L901.1 241.3 L901.9 240.0 L902.7 240.3 L903.5 240.0 L904.3 241.6 L905.1 240.9 L905.9 239.7 L906.7 239.8 L907.5 240.5 L908.3 240.9 L909.1 241.2 L909.9 239.7 L910.7 239.9 L911.5 241.3 L912.3 240.6 L913.1 240.2 L913.9 240.3 L914.7 242.0 L915.5 240.3 L916.3 241.0 L917.1 240.4 L917.9 240.6 L918.7 241.7 L919.5 242.1 L920.3 240.4 L921.1 240.0 L921.9 241.4 L922.7 240.0 L923.5 239.5 L924.3 241.8 L925.1 240.6 L925.9 241.6 L926.7 240.6 L927.5 241.8 L928.3 240.7 L929.1 239.9 L929.9 239.5 L930.7 240.9 L931.5 241.2 L932.3 241.9 L933.1 239.7 L933.9 241.1 L934.7 240.5 L935.5 240.8 L936.3 239.9 L937.1 240.2 L937.9 240.9 L938.7 241.9 L939.5 239.8 L940.3 240.8 L941.1 241.6 L941.9 242.0 L942.7 240.0 L943.5 239.8 L944.3 242.0 L945.1 242.0 L945.9 240.8 L946.7 239.6 L947.5 241.9 L948.3 240.5 L949.1 241.9 L949.9 241.1 L950.7 241.6 L951.5 239.9 L952.3 241.5 L953.1 240.1 L953.9 240.6 L954.7 241.7 L955.5 241.7 L956.3 240.0 L957.1 240.1 L957.9 240.5 L958.7 240.8" stroke="#f4f040" stroke-opacity="0.5" stroke-width="1.65" fill="none" stroke-linejoin="round" stroke-linecap="round"/>
  <path d="M66.0 240.3 L66.8 239.9 L67.6 241.2 L68.4 239.7 L69.2 240.9 L70.0 240.5 L70.8 239.7 L71.6 240.8 L72.4 239.6 L73.2 240.6 L74.0 239.7 L74.8 239.7 L75.6 240.6 L76.4 241.6 L77.2 239.8 L78.0 240.1 L78.8 241.1 L79.6 242.0 L80.4 241.0 L81.2 240.5 L82.0 242.0 L82.8 239.6 L83.6 241.7 L84.4 240.3 L85.2 239.9 L86.0 239.8 L86.8 240.3 L87.6 241.6 L88.4 240.0 L89.2 241.0 L90.0 241.2 L90.8 240.5 L91.6 240.9 L92.4 239.7 L93.2 239.7 L94.0 240.0 L94.8 241.3 L95.6 240.6 L96.4 240.3 L97.2 241.0 L98.0 240.7 M99.2 338.6 L99.8 349.0 L100.5 345.0 L101.3 343.0 L102.1 342.3 L102.9 341.9 L103.7 343.3 L104.5 342.9 L105.3 342.8 L106.1 342.7 L106.9 342.6 L107.7 343.8 L108.5 341.5 L109.3 342.1 L110.1 343.4 L110.9 342.2 L111.7 342.4 L112.5 341.4 L113.3 343.1 L114.1 343.4 L114.9 342.6 L115.7 343.1 L116.5 342.3 L117.3 343.2 L118.1 342.7 L118.9 342.5 L119.7 342.5 L120.5 343.4 L121.3 343.4 L122.1 342.4 L122.9 342.9 L123.7 341.9 L124.5 343.0 L125.3 342.7 L126.1 343.5 L126.9 343.3 L127.7 342.2 L128.5 342.3 L129.3 342.9 L130.1 341.8 L131.0 342.6 L131.2 340.8 M131.2 142.4 L131.8 131.2 L132.5 135.7 L133.3 137.5 L134.1 137.3 L134.9 138.3 L135.7 137.8 L136.5 138.5 L137.3 138.1 L138.1 138.6 L138.9 137.6 L139.7 138.8 L140.1 138.4 L140.3 140.2 M140.3 338.6 L140.9 349.0 L141.6 345.0 L142.4 343.6 L143.2 342.6 L144.0 342.0 L144.8 343.1 L145.6 342.5 L146.4 342.8 L147.2 343.2 L148.0 342.4 L148.8 342.2 L149.6 341.7 L150.4 341.8 L151.2 342.9 L152.0 343.0 L152.8 341.9 L153.8 342.2 L154.0 340.8 M154.0 142.4 L154.6 131.2 L155.4 135.7 L156.2 137.7 L157.0 137.8 L157.8 139.4 L158.6 139.4 L159.4 138.4 L160.2 138.1 L161.0 138.7 L161.8 138.1 L162.6 139.2 L163.4 138.5 L164.2 139.0 L165.0 139.4 L165.8 138.3 L166.6 137.9 L167.5 138.1 L167.7 140.2 M167.7 338.6 L168.3 349.0 L169.1 345.0 L169.9 343.3 L170.7 341.8 L171.5 342.7 L172.3 342.0 L173.1 341.7 L173.9 341.6 L174.7 342.2 L175.5 342.1 L176.3 341.4 L177.1 342.2 L177.9 342.1 L178.7 343.5 L179.5 342.5 L180.3 341.7 L181.2 342.4 L181.4 340.8 M181.4 142.4 L181.8 137.4 L182.2 133.6 L182.9 135.0 L183.7 137.2 L184.6 137.8 L185.2 139.9 L185.5 145.4 M186.0 338.6 L186.6 349.0 L187.4 345.0 L188.2 343.0 L189.0 342.6 L189.8 343.1 L190.6 342.9 L191.4 342.6 L192.2 343.1 L193.0 341.8 L193.8 341.3 L194.6 342.2 L195.4 342.6 L196.2 343.3 L197.0 341.6 L197.8 341.6 L198.6 343.8 L199.4 342.8 L200.2 341.6 L201.0 342.5 L201.8 341.9 L202.6 342.8 L203.4 343.3 L204.2 343.1 L205.0 343.1 L205.8 342.3 L206.6 342.2 L207.4 341.8 L208.2 343.2 L209.0 342.8 L209.8 343.1 L210.6 342.1 L211.4 342.1 L212.2 343.3 L213.0 343.5 L213.8 343.2 L214.6 343.2 L215.4 343.3 L216.2 343.0 L217.0 342.0 L217.8 342.6 L218.6 342.4 L219.4 341.7 L220.2 341.6 L221.0 342.2 L221.8 342.2 L222.4 342.8 L222.6 340.8 M222.6 142.4 L223.2 131.2 L223.9 135.7 L224.7 138.3 L225.5 138.7 L226.3 139.7 L227.1 139.8 L227.9 137.8 L228.7 137.4 L229.5 138.1 L230.3 138.3 L231.1 137.7 L231.5 138.5 L231.7 140.2 M231.7 338.6 L232.3 349.0 L233.1 345.0 L233.9 343.6 L234.7 341.8 L235.5 342.8 L236.3 343.8 L237.1 341.9 L237.9 342.4 L238.7 343.2 L239.5 343.6 L240.3 343.3 L241.1 342.2 L241.9 341.8 L242.7 343.5 L243.5 342.5 L244.3 342.9 L245.1 343.3 L245.9 342.6 L246.7 342.6 L247.5 343.3 L248.3 342.8 L249.1 342.1 L249.9 342.1 L250.7 341.8 L251.5 343.2 L252.3 343.3 L253.1 342.1 L253.9 343.2 L254.4 343.0 L254.6 340.8 M254.6 142.4 L254.9 137.4 L255.3 133.6 L256.0 135.0 L256.8 137.2 L257.7 137.8 L258.3 139.9 L258.7 145.4 M259.2 338.6 L259.8 349.0 L260.5 345.0 L261.3 343.4 L262.1 343.4 L262.9 341.8 L263.7 341.0 L264.5 343.5 L265.3 343.5 L266.1 342.7 L266.9 342.9 L267.7 342.4 L268.1 342.9 L268.3 340.8 M268.3 142.4 L268.9 131.2 L269.7 135.7 L270.5 138.1 L271.3 137.4 L272.1 137.5 L272.9 138.4 L273.7 139.0 L274.5 137.6 L275.3 137.8 L276.1 138.0 L276.9 139.6 L277.3 138.3 L277.5 140.2 M277.5 338.6 L278.1 349.0 L278.8 345.0 L279.6 343.2 L280.4 343.4 L281.2 341.8 L282.0 343.3 L282.8 343.2 L283.6 342.8 L284.4 342.1 L285.2 341.5 L286.0 342.9 L286.8 342.2 L287.6 341.3 L288.4 343.0 L289.2 342.3 L290.0 342.8 L290.8 342.8 L291.6 342.5 L292.4 342.5 L293.2 342.9 L294.0 342.5 L294.8 342.9 L295.6 342.0 L296.4 342.9 L297.2 342.0 L298.0 342.0 L298.8 343.2 L299.6 342.8 L300.1 342.6 L300.3 340.8 M300.3 142.4 L300.7 137.4 L301.1 133.6 L301.8 135.0 L302.6 137.2 L303.5 137.8 L304.1 139.9 L304.4 145.4 M304.9 338.6 L305.2 343.6 L305.6 347.8 L306.3 346.2 L307.1 343.9 L308.0 343.2 L308.6 341.1 L309.0 335.6 M309.5 142.4 L310.1 131.2 L310.8 135.7 L311.6 138.1 L312.4 139.0 L313.2 138.4 L314.0 137.8 L314.8 138.6 L315.6 139.3 L316.4 138.2 L317.2 138.0 L318.0 138.4 L318.8 139.7 L319.6 138.8 L320.4 138.7 L321.2 139.2 L322.0 138.3 L323.0 138.4 L323.2 140.2 M323.2 338.6 L323.8 349.0 L324.5 345.0 L325.3 343.6 L326.1 341.2 L326.9 341.8 L327.7 343.1 L328.5 341.9 L329.3 341.6 L330.1 341.6 L330.9 343.4 L331.7 343.3 L332.1 342.9 L332.3 340.8 M332.3 142.4 L332.7 137.4 L333.1 133.6 L333.8 135.0 L334.6 137.2 L335.5 137.8 L336.1 139.9 L336.4 145.4 M336.9 338.6 L337.2 343.6 L337.6 347.8 L338.3 346.2 L339.1 343.9 L340.0 343.2 L340.6 341.1 L341.0 335.6 M341.5 142.4 L342.1 131.2 L342.8 135.7 L343.6 137.5 L344.4 139.2 L345.2 138.2 L346.0 138.7 L346.8 138.8 L347.6 138.2 L348.4 139.7 L349.2 138.0 L350.0 137.9 L350.4 138.8 L350.6 140.2 M350.6 338.6 L351.2 349.0 L352.0 345.0 L352.8 343.5 L353.6 342.9 L354.4 343.2 L355.2 342.0 L356.0 341.5 L356.8 342.5 L357.6 343.5 L358.4 341.6 L359.2 342.2 L359.6 342.6 L359.8 340.8 M359.8 142.4 L360.4 131.2 L361.1 135.7 L361.9 137.3 L362.7 137.9 L363.5 138.4 L364.3 138.2 L365.1 139.4 L365.9 138.4 L366.7 139.2 L367.5 138.1 L368.3 138.1 L368.7 138.0 L368.9 140.2 M368.9 338.6 L369.5 349.0 L370.2 345.0 L371.0 343.5 L371.8 342.6 L372.6 342.7 L373.4 342.8 L374.2 342.9 L375.0 342.6 L375.8 342.2 L376.6 343.0 L377.4 342.4 L378.2 343.3 L379.0 342.1 L379.8 341.5 L380.6 342.7 L381.4 342.7 L382.2 342.1 L383.0 343.3 L383.8 342.6 L384.6 343.3 L385.4 342.1 L386.2 343.2 L387.0 341.5 L387.8 343.3 L388.6 342.7 L389.4 342.3 L390.2 342.5 L391.0 343.4 L391.8 342.3 L392.6 341.9 L393.4 342.5 L394.2 342.1 L395.0 342.0 L395.8 342.0 L396.6 341.6 L397.4 342.0 L398.2 342.3 L399.0 342.3 L399.8 343.0 L400.6 342.1 L401.4 342.7 L402.2 342.0 L403.0 342.3 L403.8 341.6 L404.6 342.2 L405.4 341.7 L406.2 343.0 L407.0 342.6 L407.8 342.0 L408.6 342.6 L409.4 343.4 L409.8 342.3 L410.0 340.8 M410.0 142.4 L410.4 137.4 L410.8 133.6 L411.5 135.0 L412.3 137.2 L413.2 137.8 L413.8 139.9 L414.1 145.4 M414.6 338.6 L415.2 349.0 L416.0 345.0 L416.8 343.5 L417.6 343.2 L418.4 342.9 L419.2 341.8 L420.0 342.9 L420.8 343.5 L421.6 343.3 L422.4 341.8 L423.2 343.4 L424.0 343.4 L424.8 342.8 L425.6 342.0 L426.4 342.3 L427.2 342.1 L428.0 341.9 L428.8 341.5 L429.6 343.0 L430.4 342.4 L431.2 342.0 L432.0 341.6 L432.8 343.2 L433.6 343.5 L434.4 343.0 L435.2 342.0 L436.0 342.0 L436.8 342.4 L437.6 342.6 L438.4 341.8 L439.2 342.4 L440.0 342.3 L440.8 343.6 L441.6 343.4 L442.4 342.6 L443.2 342.2 L444.0 343.6 L444.8 342.2 L445.6 342.2 L446.4 341.7 L447.2 342.5 L448.0 342.5 L448.8 342.5 L449.6 342.0 L450.4 342.7 L451.2 341.7 L452.0 342.1 L452.8 341.8 L453.6 342.5 L454.4 341.7 L455.2 341.6 L455.6 342.4 L455.8 340.8 M455.8 142.4 L456.1 137.4 L456.5 133.6 L457.2 135.0 L458.0 137.2 L458.9 137.8 L459.5 139.9 L459.9 145.4 M460.3 338.6 L460.9 349.0 L461.7 345.0 L462.5 342.9 L463.3 342.7 L464.1 342.4 L464.9 342.8 L465.7 343.6 L466.5 343.4 L467.3 341.9 L468.1 342.1 L468.9 344.0 L469.7 342.1 L470.5 342.6 L471.3 342.7 L472.1 342.1 L472.9 343.5 L473.7 343.1 L474.5 342.6 L475.3 343.3 L476.1 343.4 L476.9 341.7 L477.7 342.4 L478.5 342.7 L479.3 343.4 L480.1 343.1 L480.9 343.0 L481.7 342.8 L482.5 343.5 L483.3 342.9 L484.1 342.8 L484.9 342.1 L485.7 341.9 L486.5 341.9 L487.3 342.2 L488.1 341.8 L488.9 343.4 L489.7 342.7 L490.5 342.7 L491.3 342.8 L492.1 343.0 L492.9 342.6 L493.7 341.6 L494.5 343.1 L495.3 343.1 L496.1 342.6 L496.9 342.6 L497.7 342.9 L498.5 341.8 L499.3 343.1 L500.1 342.1 L500.9 341.8 L501.3 342.4 L501.5 340.8 M501.5 142.4 L501.8 137.4 L502.2 133.6 L502.9 135.0 L503.7 137.2 L504.6 137.8 L505.2 139.9 L505.6 145.4 M506.1 338.6 L506.7 349.0 L507.4 345.0 L508.2 343.4 L509.0 343.6 L509.8 344.0 L510.6 342.2 L511.4 341.9 L512.2 342.9 L513.0 343.4 L513.8 342.8 L514.6 342.4 L515.4 343.1 L516.2 342.2 L517.0 341.8 L517.8 341.8 L518.6 343.1 L519.4 342.6 L520.2 342.7 L521.0 341.4 L521.8 341.8 L522.6 342.4 L523.4 342.9 L524.2 342.7 L525.0 342.9 L525.8 342.4 L526.6 342.7 L527.4 342.3 L528.2 342.5 L529.0 342.0 L529.8 343.4 L530.6 341.9 L531.4 343.4 L532.2 343.5 L533.3 342.2 L533.5 340.8 M533.5 142.4 L534.1 131.2 L534.8 135.7 L535.6 137.8 L536.4 140.0 L537.2 138.5 L538.0 137.3 L538.8 137.6 L539.6 139.8 L540.4 138.1 L541.2 138.1 L542.0 137.5 L542.4 138.4 L542.6 140.2 M542.6 338.6 L543.0 343.6 L543.4 347.8 L544.1 346.2 L544.9 343.9 L545.8 343.2 L546.4 341.1 L546.7 335.6 M547.2 142.4 L547.6 137.4 L548.0 133.6 L548.7 135.0 L549.5 137.2 L550.4 137.8 L551.0 139.9 L551.3 145.4 M551.8 338.6 L552.4 349.0 L553.1 345.0 L553.9 343.7 L554.7 343.5 L555.5 343.3 L556.3 343.1 L557.1 342.4 L557.9 342.2 L558.7 343.9 L559.5 342.5 L560.3 341.2 L561.1 341.7 L561.9 343.0 L562.7 342.5 L563.5 341.8 L564.3 341.8 L565.1 342.6 L565.9 342.3 L566.7 343.0 L567.5 341.5 L568.3 343.3 L569.1 343.4 L569.9 341.7 L570.7 343.3 L571.5 343.2 L572.3 343.5 L573.1 342.1 L573.9 342.2 L574.7 342.5 L575.5 343.7 L576.3 342.7 L577.1 342.2 L577.9 342.5 L578.7 342.3 L579.5 341.7 L580.3 341.7 L581.1 343.3 L581.9 342.3 L582.7 343.4 L583.5 342.0 L584.3 342.2 L585.1 342.7 L585.9 342.0 L586.7 342.3 L587.5 343.5 L588.3 343.4 L589.1 343.2 L589.9 342.8 L590.7 343.4 L591.5 343.5 L592.3 342.7 L592.7 342.8 L592.9 340.8 M592.9 142.4 L593.3 137.4 L593.7 133.6 L594.4 135.0 L595.2 137.2 L596.1 137.8 L596.7 139.9 L597.0 145.4 M597.5 338.6 L598.1 349.0 L598.8 345.0 L599.6 342.7 L600.4 342.0 L601.2 342.6 L602.0 343.3 L602.8 342.7 L603.6 341.4 L604.4 343.0 L605.2 342.2 L606.0 343.0 L606.8 342.1 L607.6 341.8 L608.4 343.2 L609.2 343.9 L610.0 342.1 L610.8 342.6 L611.6 342.3 L612.4 343.0 L613.2 342.4 L614.0 341.7 L614.8 341.9 L615.6 342.3 L616.4 343.4 L617.2 342.4 L618.0 342.0 L618.8 343.6 L619.6 343.6 L620.2 342.6 L620.4 340.8 M620.4 142.4 L621.0 131.2 L621.7 135.7 L622.5 137.4 L623.3 137.1 L624.1 137.6 L624.9 138.0 L625.7 138.4 L626.5 137.6 L627.3 138.1 L628.1 139.4 L628.9 139.3 L629.3 138.3 L629.5 140.2 M629.5 338.6 L629.9 343.6 L630.3 347.8 L631.0 346.2 L631.8 343.9 L632.7 343.2 L633.3 341.1 L633.6 335.6 M634.1 142.4 L634.7 131.2 L635.4 135.7 L636.2 137.7 L637.0 137.9 L637.8 138.7 L638.6 137.9 L639.4 137.5 L640.2 139.0 L641.0 138.1 L641.8 138.7 L642.6 138.3 L643.0 138.7 L643.2 140.2 M643.2 338.6 L643.8 349.0 L644.6 345.0 L645.4 342.9 L646.2 342.8 L647.0 342.7 L647.8 341.9 L648.6 343.2 L649.4 343.8 L650.2 343.6 L651.0 341.3 L651.8 341.4 L652.6 343.3 L653.4 343.7 L654.2 342.3 L655.0 342.5 L655.8 341.9 L656.6 342.7 L657.4 343.2 L658.2 342.9 L659.0 343.4 L659.8 343.8 L660.6 342.0 L661.4 341.6 L662.2 342.0 L663.0 342.9 L663.8 342.9 L664.6 343.2 L665.4 343.0 L666.2 343.1 L667.0 343.1 L667.8 342.4 L668.6 342.7 L669.4 341.9 L670.2 343.2 L671.0 342.0 L671.8 343.4 L672.6 343.0 L673.4 342.3 L674.2 341.8 L675.0 342.1 L675.8 342.9 L676.6 343.0 L677.4 341.8 L678.2 341.7 L679.0 342.7 L679.6 342.7 L679.8 340.8 M679.8 142.4 L680.4 131.2 L681.1 135.7 L681.9 137.7 L682.7 138.0 L683.5 137.0 L684.3 138.5 L685.1 138.8 L685.9 138.9 L686.7 138.3 L687.5 139.4 L688.3 138.8 L688.7 138.2 L688.9 140.2 M688.9 338.6 L689.5 349.0 L690.3 345.0 L691.1 342.9 L691.9 342.4 L692.7 342.6 L693.5 342.2 L694.3 342.3 L695.1 342.4 L695.9 342.7 L696.7 342.6 L697.5 342.8 L698.3 343.0 L699.1 342.2 L699.9 342.1 L700.7 342.3 L701.5 342.1 L702.5 342.7 L702.7 340.8 M702.7 142.4 L703.3 131.2 L704.0 135.7 L704.8 137.5 L705.6 139.5 L706.4 138.7 L707.2 137.3 L708.0 139.0 L708.8 138.5 L709.6 139.3 L710.4 137.5 L711.2 137.6 L711.6 138.6 L711.8 140.2 M711.8 338.6 L712.4 349.0 L713.1 345.0 L713.9 343.0 L714.7 342.0 L715.5 342.4 L716.3 342.6 L717.1 342.2 L717.9 342.4 L718.7 343.6 L719.5 342.4 L720.3 342.3 L720.7 342.4 L720.9 340.8 M720.9 142.4 L721.5 131.2 L722.3 135.7 L723.1 138.3 L723.9 137.2 L724.7 136.9 L725.5 138.4 L726.3 139.7 L727.1 139.0 L727.9 138.3 L728.7 139.4 L729.5 139.7 L730.3 138.1 L731.1 137.4 L731.9 139.2 L732.7 139.3 L733.5 137.6 L734.5 138.5 L734.7 140.2 M734.7 338.6 L735.3 349.0 L736.0 345.0 L736.8 343.1 L737.6 343.0 L738.4 341.8 L739.2 341.0 L740.0 342.3 L740.8 342.9 L741.6 343.5 L742.4 341.4 L743.2 343.4 L744.0 342.5 L744.8 342.4 L745.6 342.8 L746.4 343.1 L747.2 342.8 L748.2 342.2 L748.4 340.8 M748.4 142.4 L749.0 131.2 L749.7 135.7 L750.5 137.8 L751.3 138.5 L752.1 138.0 L752.9 138.8 L753.7 139.1 L754.5 136.9 L755.3 138.2 L756.1 139.5 L756.9 138.9 L757.7 137.1 L758.5 137.4 L759.3 138.0 L760.1 139.3 L760.9 137.6 L761.7 138.7 L762.5 139.5 L763.3 138.2 L764.1 137.7 L764.9 139.1 L765.7 138.8 L766.5 138.2 L766.7 140.2 M766.7 338.6 L767.0 343.6 L767.4 347.8 L768.1 346.2 L768.9 343.9 L769.8 343.2 L770.4 341.1 L770.8 335.6 M771.2 142.4 L771.8 131.2 L772.6 135.7 L773.4 138.0 L774.2 137.3 L775.0 137.4 L775.8 139.5 L776.6 139.3 L777.4 138.1 L778.2 139.1 L779.0 138.0 L779.8 138.1 L780.2 138.4 L780.4 140.2 M780.4 338.6 L780.7 343.6 L781.1 347.8 L781.8 346.2 L782.6 343.9 L783.5 343.2 L784.1 341.1 L784.5 335.6 M784.9 142.4 L785.3 137.4 L785.7 133.6 L786.4 135.0 L787.2 137.2 L788.1 137.8 L788.7 139.9 L789.0 145.4 M789.5 338.6 L789.9 343.6 L790.3 347.8 L791.0 346.2 L791.8 343.9 L792.7 343.2 L793.3 341.1 L793.6 335.6 M794.1 142.4 L794.4 137.4 L794.8 133.6 L795.5 135.0 L796.3 137.2 L797.2 137.8 L797.8 139.9 L798.2 145.4 M798.7 338.6 L799.3 349.0 L800.0 345.0 L800.8 343.7 L801.6 341.8 L802.4 342.5 L803.2 343.0 L804.0 342.3 L804.8 342.9 L805.6 342.2 L806.4 343.7 L807.2 342.9 L808.0 342.8 L808.8 343.2 L809.6 343.2 L810.4 342.3 L811.2 341.9 L812.2 342.5 L812.4 340.8 M812.4 142.4 L813.0 131.2 L813.7 135.7 L814.5 138.1 L815.3 137.8 L816.1 138.2 L816.9 137.9 L817.7 138.2 L818.5 137.6 L819.3 138.0 L820.1 138.0 L820.9 139.8 L821.7 139.3 L822.5 138.9 L823.3 137.8 L824.1 138.0 L824.9 137.8 L825.9 138.4 L826.1 140.2 M826.1 338.6 L826.4 343.6 L826.8 347.8 L827.5 346.2 L828.3 343.9 L829.2 343.2 L829.8 341.1 L830.2 335.6 M830.7 142.4 L831.0 137.4 L831.4 133.6 L832.1 135.0 L832.9 137.2 L833.8 137.8 L834.4 139.9 L834.8 145.4 M835.2 338.6 L835.6 343.6 L836.0 347.8 L836.7 346.2 L837.5 343.9 L838.4 343.2 L839.0 341.1 L839.3 335.6 M839.8 142.4 L840.4 131.2 L841.2 135.7 L842.0 138.0 L842.8 137.4 L843.6 138.7 L844.4 139.2 L845.2 138.4 L846.0 138.4 L846.8 139.3 L847.6 139.2 L848.4 137.5 L848.8 138.7 L849.0 140.2 M849.0 338.6 L849.6 349.0 L850.3 345.0 L851.1 343.0 L851.9 342.5 L852.7 342.4 L853.5 341.9 L854.3 342.7 L855.1 342.3 L855.9 341.4 L856.7 343.1 L857.5 343.2 L857.9 342.5 L858.1 340.8 M858.1 142.4 L858.7 131.2 L859.5 135.7 L860.3 137.7 L861.1 138.9 L861.9 137.4 L862.7 138.5 L863.5 139.1 L864.3 139.8 L865.1 137.3 L865.9 137.9 L866.7 139.2 L867.0 138.7 L867.2 140.2 M867.2 338.6 L867.6 343.6 L868.0 347.8 L868.7 346.2 L869.5 343.9 L870.4 343.2 L871.0 341.1 L871.3 335.6 M871.8 142.4 L872.2 137.4 L872.6 133.6 L873.3 135.0 L874.1 137.2 L875.0 137.8 L875.6 139.9 L875.9 145.4 M876.4 243.8 L876.9 253.5 L877.7 247.0 L878.7 242.5 L879.5 241.9 L880.3 239.6 L881.1 240.3 L881.9 239.8 L882.7 240.0 L883.5 242.0 L884.3 241.0 L885.1 241.9 L885.9 240.5 L886.7 241.8 L887.5 240.7 L888.3 240.2 L889.1 241.5 L889.9 242.0 L890.7 239.8 L891.5 241.0 L892.3 241.1 L893.1 240.1 L893.9 240.5 L894.7 239.9 L895.5 240.0 L896.3 240.2 L897.1 241.1 L897.9 241.2 L898.7 240.0 L899.5 239.5 L900.3 240.4 L901.1 241.3 L901.9 240.0 L902.7 240.3 L903.5 240.0 L904.3 241.6 L905.1 240.9 L905.9 239.7 L906.7 239.8 L907.5 240.5 L908.3 240.9 L909.1 241.2 L909.9 239.7 L910.7 239.9 L911.5 241.3 L912.3 240.6 L913.1 240.2 L913.9 240.3 L914.7 242.0 L915.5 240.3 L916.3 241.0 L917.1 240.4 L917.9 240.6 L918.7 241.7 L919.5 242.1 L920.3 240.4 L921.1 240.0 L921.9 241.4 L922.7 240.0 L923.5 239.5 L924.3 241.8 L925.1 240.6 L925.9 241.6 L926.7 240.6 L927.5 241.8 L928.3 240.7 L929.1 239.9 L929.9 239.5 L930.7 240.9 L931.5 241.2 L932.3 241.9 L933.1 239.7 L933.9 241.1 L934.7 240.5 L935.5 240.8 L936.3 239.9 L937.1 240.2 L937.9 240.9 L938.7 241.9 L939.5 239.8 L940.3 240.8 L941.1 241.6 L941.9 242.0 L942.7 240.0 L943.5 239.8 L944.3 242.0 L945.1 242.0 L945.9 240.8 L946.7 239.6 L947.5 241.9 L948.3 240.5 L949.1 241.9 L949.9 241.1 L950.7 241.6 L951.5 239.9 L952.3 241.5 L953.1 240.1 L953.9 240.6 L954.7 241.7 L955.5 241.7 L956.3 240.0 L957.1 240.1 L957.9 240.5 L958.7 240.8" stroke="#f2ea10" stroke-width="1.65" fill="none" stroke-linejoin="round" stroke-linecap="round" style="mix-blend-mode:screen"/>
  <text x="57.8" y="238.8" font-family="Liberation Sans, sans-serif" font-size="7.6" font-weight="bold" fill="#e6e634" textLength="7.4" lengthAdjust="spacingAndGlyphs">Z1</text>
  <path d="M59 240.9 H67" stroke="#eeee30" stroke-width="1.6"/>
  <path d="M961 492.5 H964 M962.5 490 L965.8 492.5 L962.5 495" stroke="#e8e820" stroke-width="1.4" fill="none"/>
 </svg>
 <div id="tbl">
  <div id="row"></div>
  <div id="flx"><span class="l" style="left:1.2px;top:0.3px;transform:scaleX(0.9)">FLX</span></div>
  <span class="th" style="left:23.3px;transform:scaleX(0.924)">Time</span>
  <span class="th" style="left:80.0px;transform:scaleX(0.986)">Bit Rat...</span>
  <span class="th" style="left:137.3px;transform:scaleX(0.950)">Fra...</span>
  <span class="th" style="left:176.7px;transform:scaleX(1.064)">P...</span>
  <span class="th" style="left:208.0px;transform:scaleX(0.983)">Heade...</span>
  <span class="th" style="left:262.0px;transform:scaleX(0.937)">Cyc...</span>
  <span class="th" style="left:290.7px;transform:scaleX(0.844)">Data</span>
  <span class="th" style="left:455.7px;transform:scaleX(0.966)">Traile...</span>
  <span class="th" style="left:505.7px;transform:scaleX(0.923)">Sy...</span>
  <i class="tri" style="left:125.7px"></i>
  <i class="tri" style="left:165.7px"></i>
  <i class="tri" style="left:197.0px"></i>
  <i class="tri" style="left:251.0px"></i>
  <i class="tri" style="left:493.5px"></i>
  <i class="tri" style="left:529.3px"></i>
  <i class="cs" style="left:78.7px"></i>
  <i class="cs" style="left:135.7px"></i>
  <i class="cs" style="left:174.5px"></i>
  <i class="cs" style="left:206.0px"></i>
  <i class="cs" style="left:260.0px"></i>
  <i class="cs" style="left:289.0px"></i>
  <i class="cs" style="left:454.0px"></i>
  <i class="cs" style="left:503.5px"></i>
  <i class="cs" style="left:537.0px"></i>
  <span class="td" style="left:2.0px;transform:scaleX(0.827)">5</span>
  <span class="td" style="left:23.0px;transform:scaleX(0.900)">-412.954 µs</span>
  <span class="td" style="left:87.0px;transform:scaleX(0.898)">10.0009e+6</span>
  <span class="td" style="left:149.0px;transform:scaleX(0.930)">0x1</span>
  <span class="td" style="left:176.7px;transform:scaleX(0.827)">4</span>
  <span class="td" style="left:221.0px;transform:scaleX(0.907)">0x42d</span>
  <span class="td" style="left:262.0px;transform:scaleX(0.836)">25</span>
  <span class="td" style="left:333.3px;transform:scaleX(0.922)">0x0 0x6 0xd 0x133</span>
  <span class="td" style="left:458.0px;transform:scaleX(0.933)">0x3da3b3</span>
 </div>
 <div id="scroll" style="position:absolute;left:540.5px;top:495px;width:22.5px;height:24.8px;background:#6a6a6a;border:1px solid #9c9c9c;box-sizing:border-box;">
  <svg width="22" height="24" viewBox="0 0 22 24" style="position:absolute;left:-1px;top:-1px"><rect x="1" y="21" width="20.5" height="2.8" fill="#444"/><path d="M11.5 1.6 L20 10.2 H3 Z M11.5 21.4 L20 12.8 H3 Z" fill="#050505" stroke="#c4c4c4" stroke-width="1"/></svg>
 </div>
 <div class="box" id="z1" style="left:1px;top:520px;width:71px;height:35px;background:#2d557a;border:1px solid #2f8fe4;box-sizing:border-box;">
  <div style="position:absolute;left:0;top:0;width:69px;height:11px;background:#f0f02e;color:#111;"></div>
  <span class="l" style="left:2.5px;top:0.2px;font-size:10.5px;line-height:11.5px;transform:scaleX(0.800);color:#111;">Z1</span>
  <span class="l" style="left:28.0px;top:0.2px;font-size:10.5px;line-height:11.5px;transform:scaleX(0.902);color:#111;">zoom(F1)</span>
  <span class="l" style="left:21.5px;top:12.0px;font-size:10.5px;line-height:11.5px;transform:scaleX(0.895);">500 mV/div</span>
  <span class="l" style="left:24.0px;top:23.0px;font-size:10.5px;line-height:11.5px;transform:scaleX(0.873);">1.95 µs/div</span>
 </div>
 <div class="box" id="tb" style="left:758px;top:520.5px;width:79px;height:34.5px;background:#474747;">
  <div style="position:absolute;left:0;top:0;width:79px;height:10.5px;background:#f8f8f8;"></div>
  <span class="l" style="left:2.0px;top:0.0px;font-size:10.5px;line-height:11.5px;transform:scaleX(0.857);color:#111;">Tbase</span>
  <span class="l" style="left:49.5px;top:0.0px;font-size:10.5px;line-height:11.5px;transform:scaleX(0.898);color:#111;">260 µs</span>
  <span class="l" style="left:35.0px;top:12.6px;font-size:10.5px;line-height:11.5px;transform:scaleX(0.894);">500 µs/div</span>
  <span class="l" style="left:2.0px;top:23.6px;font-size:10.5px;line-height:11.5px;transform:scaleX(0.857);">2.5 MS</span>
  <span class="l" style="left:38.5px;top:23.6px;font-size:10.5px;line-height:11.5px;transform:scaleX(0.891);">500 MS/s</span>
 </div>
 <div class="box" id="tr" style="left:840px;top:520.5px;width:68px;height:34.5px;background:#474747;">
  <div style="position:absolute;left:0;top:0;width:68px;height:10.5px;background:#f8f8f8;"></div>
  <span class="l" style="left:2.0px;top:0.0px;font-size:10.5px;line-height:11.5px;transform:scaleX(0.867);color:#111;">Trigger</span>
  <span class="l" style="left:2.0px;top:12.6px;font-size:10.5px;line-height:11.5px;transform:scaleX(0.856);">Stop</span>
  <span class="l" style="left:32.5px;top:12.6px;font-size:10.5px;line-height:11.5px;transform:scaleX(0.857);">-320 mV</span>
  <span class="l" style="left:2.0px;top:23.6px;font-size:10.5px;line-height:11.5px;transform:scaleX(0.844);">FlexRay</span>
  <span style="position:absolute;left:36px;top:0.5px;width:12px;height:9px;background:#0c0c0c;border-radius:1.5px"></span><span class="l" style="left:37.6px;top:-0.6px;font-size:9px;line-height:10px;font-weight:bold;color:#fff;transform:scaleX(0.8)">C1</span>
  <span style="position:absolute;left:51.5px;top:0.5px;width:14.5px;height:9px;background:#0c0c0c;border-radius:1.5px"></span><span class="l" style="left:53px;top:-0.6px;font-size:9px;line-height:10px;font-weight:bold;color:#fff;transform:scaleX(0.82)">DC</span>
 </div>
 <div id="foot"><span class="l" style="left:4.5px;top:1.5px;font-size:10.3px;line-height:10px;color:#f6f6f6;font-weight:bold;-webkit-text-stroke:0.35px #f6f6f6;transform:scaleX(0.783)">TELEDYNE</span><span class="l" style="left:50.5px;top:1.5px;font-size:10.3px;line-height:10px;color:#e8e8e8;transform:scaleX(0.826)">LECROY</span></div>
</div>
</body></html>
